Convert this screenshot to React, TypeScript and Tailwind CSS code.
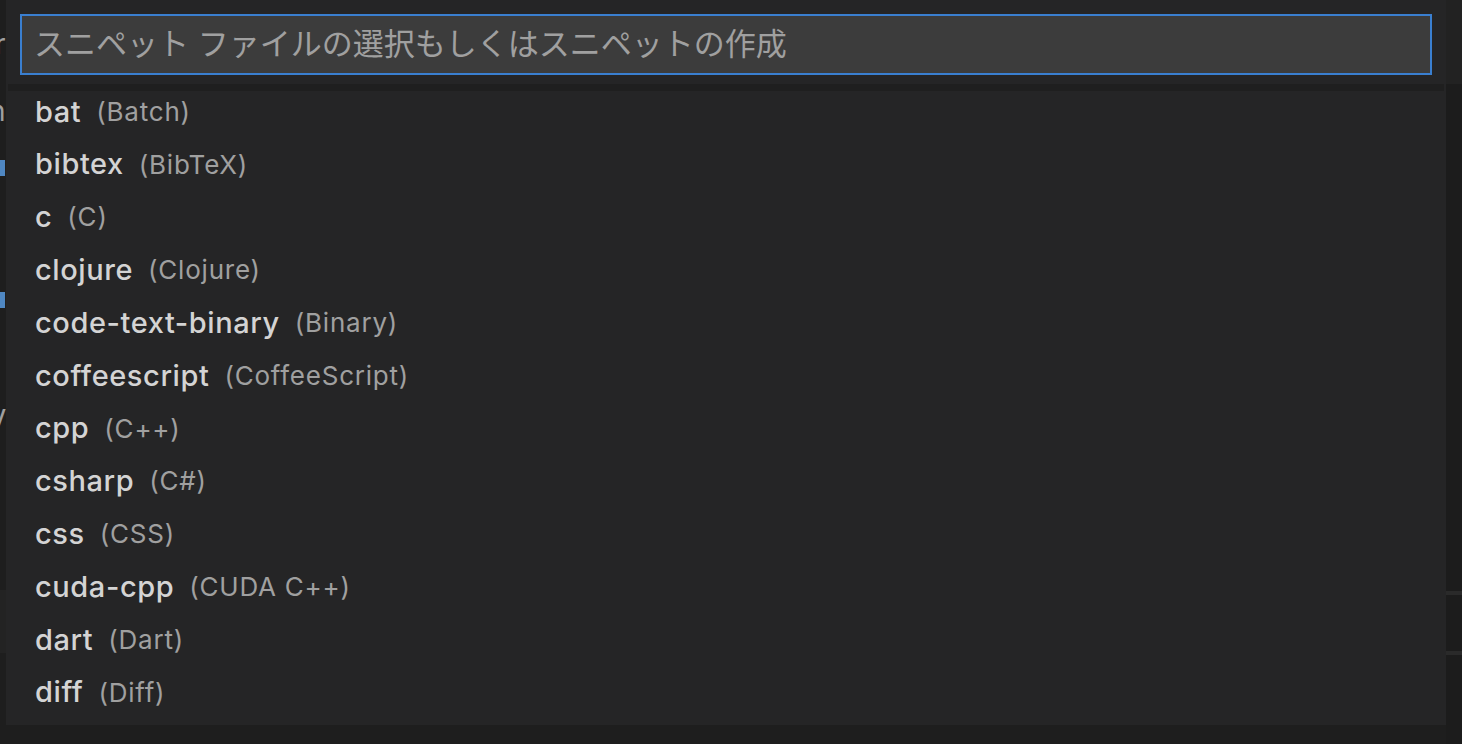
import React from "react";

const items = [
  { label: "bat", desc: "Batch" },
  { label: "bibtex", desc: "BibTeX" },
  { label: "c", desc: "C" },
  { label: "clojure", desc: "Clojure" },
  { label: "code-text-binary", desc: "Binary" },
  { label: "coffeescript", desc: "CoffeeScript" },
  { label: "cpp", desc: "C++" },
  { label: "csharp", desc: "C#" },
  { label: "css", desc: "CSS" },
  { label: "cuda-cpp", desc: "CUDA C++" },
  { label: "dart", desc: "Dart" },
  { label: "diff", desc: "Diff" },
];

const App = () => {
  return (
    <div
      className="relative h-[744px] w-[1462px] overflow-hidden bg-[#1e1e1e]"
      style={{ fontFamily: "Inter, 'Noto Sans CJK JP', sans-serif" }}
    >
      {/* editor behind the quick pick */}
      <div className="flex h-full">
        <div className="relative w-[6px] bg-[#1e1e1e] text-[28px] leading-none text-[#a0a0a0]">
          <span className="absolute -left-[5px] top-[30px]">r</span>
          <span className="absolute -left-[11px] top-[97px]">n</span>
          <span className="absolute left-0 top-[160px] h-[16px] w-[5px] bg-[#4f87c2]" />
          <span className="absolute left-0 top-[292px] h-[16px] w-[5px] bg-[#4f87c2]" />
          <span className="absolute -left-[13px] top-[406px]">V</span>
          <div className="absolute left-0 top-[590px] h-[63px] w-[6px] bg-[#232323]" />
        </div>
        <div className="flex-1" />
        <div className="flex w-[16px] flex-col">
          <div className="h-[84px] bg-[#222222]" />
          <div className="h-[507px] bg-[#1c1c1c]" />
          <div className="h-[4px] bg-[#2a2a2a]" />
          <div className="h-[56px] bg-[#1c1c1c]" />
          <div className="h-[4px] bg-[#2a2a2a]" />
          <div className="flex-1 bg-[#1c1c1c]" />
        </div>
      </div>

      {/* quick pick */}
      <div className="absolute left-[6px] top-0 flex h-[725px] w-[1440px] flex-col bg-[#252526]">
        <div className="px-[14px] pt-[14px]">
          <div className="flex h-[61px] items-center border-2 border-[#3a7fd0] bg-[#3c3c3c] px-[12px]">
            <span className="text-[31px] text-[#a0a0a0]">
              スニペット ファイルの選択もしくはスニペットの作成
            </span>
          </div>
        </div>
        <div className="mx-[2px] mt-[9px] h-[7px] bg-[#1f1f1f]" />
        <div className="flex flex-col">
          {items.map((item) => (
            <div
              key={item.label}
              className="flex h-[52.8px] items-center gap-[15px] px-[29px] pb-[12px]"
            >
              <span className="text-[29px] font-medium tracking-[0.02em] text-[#d4d4d4]">
                {item.label}
              </span>
              <span className="text-[26px] tracking-[0.03em] text-[#a0a0a0]">
                ({item.desc})
              </span>
            </div>
          ))}
        </div>
      </div>
    </div>
  );
};

export default App;
